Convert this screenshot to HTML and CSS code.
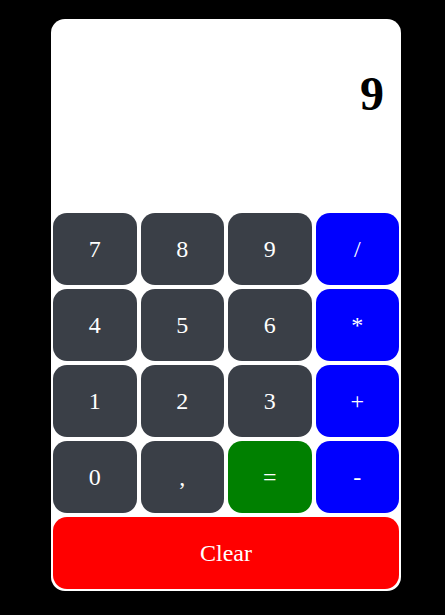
FILE: index.html
```html
<!DOCTYPE html>
<html>
<head>
<meta charset="utf-8">
<link rel="stylesheet" href="styles.css">
</head>
<body>
<div class="calculator">
  <div class="display"><span class="result">9</span></div>
  <div class="keys">
    <button class="key num">7</button>
    <button class="key num">8</button>
    <button class="key num">9</button>
    <button class="key op">/</button>
    <button class="key num">4</button>
    <button class="key num">5</button>
    <button class="key num">6</button>
    <button class="key op">*</button>
    <button class="key num">1</button>
    <button class="key num">2</button>
    <button class="key num">3</button>
    <button class="key op">+</button>
    <button class="key num">0</button>
    <button class="key num">,</button>
    <button class="key eq">=</button>
    <button class="key op">-</button>
    <button class="key clear">Clear</button>
  </div>
</div>
</body>
</html>
```
FILE: styles.css
```css
html, body {
  margin: 0;
  background: #000;
}
body {
  padding: 19px 0 0 51px;
  font-family: "Liberation Serif", "Times New Roman", serif;
}
.calculator {
  width: 350px;
  background: #fff;
  border-radius: 14px;
  overflow: hidden;
}
.display {
  height: 192px;
  box-sizing: border-box;
  padding: 48px 17px 0 0;
  text-align: right;
}
.result {
  font-size: 48px;
  font-weight: bold;
  line-height: 53px;
  color: #000;
}
.keys {
  display: grid;
  grid-template-columns: repeat(4, 1fr);
}
.key {
  margin: 2px;
  height: 72px;
  border: none;
  border-radius: 14px;
  color: #fff;
  font-family: "Liberation Serif", "Times New Roman", serif;
  font-size: 24px;
  padding: 0;
}
.num { background: #3a3f47; }
.op { background: #0000ff; }
.eq { background: #008000; }
.clear {
  grid-column: 1 / -1;
  background: #ff0000;
}
```
